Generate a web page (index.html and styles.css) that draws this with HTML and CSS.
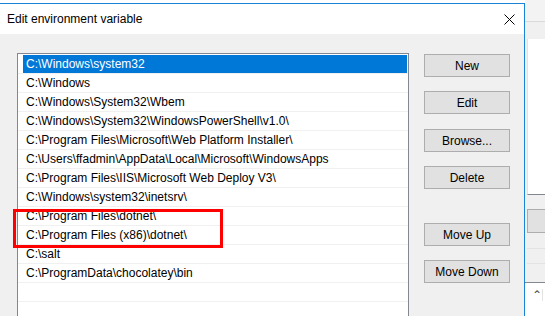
FILE: index.html
```html
<!DOCTYPE html>
<html>
<head>
<meta charset="utf-8">
<title>Edit environment variable</title>
<link rel="stylesheet" href="styles.css">
</head>
<body>
<div class="screen">
  <div class="dialog">
    <div class="titlebar">
      <span class="title">Edit environment variable</span>
      <svg class="close" width="11" height="11" viewBox="0 0 11 11"><path d="M0.5 0.5L10.5 10.5M10.5 0.5L0.5 10.5" stroke="#000" stroke-width="1" fill="none"/></svg>
    </div>
    <div class="content">
      <div class="list">
        <div class="row selected"><span class="cell">C:\Windows\system32</span></div>
        <div class="row"><span class="cell">C:\Windows</span></div>
        <div class="row"><span class="cell">C:\Windows\System32\Wbem</span></div>
        <div class="row"><span class="cell">C:\Windows\System32\WindowsPowerShell\v1.0\</span></div>
        <div class="row"><span class="cell">C:\Program Files\Microsoft\Web Platform Installer\</span></div>
        <div class="row"><span class="cell">C:\Users\ffadmin\AppData\Local\Microsoft\WindowsApps</span></div>
        <div class="row"><span class="cell">C:\Program Files\IIS\Microsoft Web Deploy V3\</span></div>
        <div class="row"><span class="cell">C:\Windows\system32\inetsrv\</span></div>
        <div class="row"><span class="cell">C:\Program Files\dotnet\</span></div>
        <div class="row"><span class="cell">C:\Program Files (x86)\dotnet\</span></div>
        <div class="row"><span class="cell">C:\salt</span></div>
        <div class="row"><span class="cell">C:\ProgramData\chocolatey\bin</span></div>
        <div class="row"><span class="cell"></span></div>
        <div class="row"><span class="cell"></span></div>
      </div>
      <div class="buttons">
        <div class="btn-group">
          <button class="btn">New</button>
          <button class="btn">Edit</button>
          <button class="btn btn-shift">Browse...</button>
          <button class="btn">Delete</button>
        </div>
        <div class="btn-group">
          <button class="btn">Move Up</button>
          <button class="btn">Move Down</button>
        </div>
      </div>
      <div class="annotation"></div>
    </div>
  </div>
  <div class="behind">
    <div class="b-title"></div>
    <div class="b-gap"></div>
    <div class="b-list"></div>
    <div class="b-panel">
      <div class="b-btn"></div>
      <div class="b-line"></div>
      <div class="b-line"></div>
    </div>
    <div class="b-list2">
      <span class="b-arrow">&#x2303;</span>
    </div>
  </div>
</div>
</body>
</html>
```
FILE: styles.css
```css
* { box-sizing: border-box; }
html, body { margin: 0; padding: 0; }
body {
  width: 545px;
  height: 316px;
  overflow: hidden;
  background: #fff;
  font-family: "Liberation Sans", Arial, sans-serif;
  font-size: 12px;
  color: #000;
}
.screen { display: flex; height: 316px; overflow: hidden; }

.dialog {
  width: 525px;
  flex: none;
  margin-top: 3px;
  height: 313px;
  border-top: 1px solid #1883d7;
  border-right: 1px solid #1883d7;
  display: flex;
  flex-direction: column;
}
.titlebar {
  height: 30px;
  flex: none;
  background: #fff;
  display: flex;
  align-items: center;
  justify-content: space-between;
  padding: 0 9px 0 7px;
}
.close { display: block; }

.content {
  flex: 1;
  position: relative;
  overflow: hidden;
  background: #f0f0f0;
  display: flex;
  align-items: flex-start;
  padding: 19px 0 0 17px;
}
.list {
  width: 392px;
  height: 263px;
  flex: none;
  overflow: hidden;
  background: #fff;
  border: 1px solid #828790;
  border-bottom: none;
  padding-top: 1px;
}
.row {
  height: 19px;
  border-bottom: 1px solid #f0f0f0;
  padding: 0 1px 0 5px;
}
.cell {
  display: block;
  height: 18px;
  line-height: 18px;
  padding-left: 3px;
  white-space: nowrap;
  overflow: hidden;
}
.selected .cell { background: #0078d7; color: #fff; }

.buttons {
  margin: 1px 0 0 15px;
  width: 86px;
  display: flex;
  flex-direction: column;
  gap: 34px;
}
.btn-group { display: flex; flex-direction: column; gap: 14px; }
.btn {
  width: 86px;
  height: 23px;
  padding: 0;
  border: 1px solid #adadad;
  background: #e1e1e1;
  font: inherit;
  color: #000;
}
.btn-shift { margin-top: 1px; }

.annotation {
  position: absolute;
  left: 13px;
  top: 175px;
  width: 210px;
  height: 39px;
  border: 3px solid #ff0000;
}

.behind {
  flex: 1;
  display: flex;
  flex-direction: column;
  background: #f0f0f0;
  overflow: hidden;
}
.b-title { height: 22px; background: #f3f3f3; border-bottom: 1px solid #d9d9d9; flex: none; }
.b-gap { height: 17px; flex: none; }
.b-list {
  height: 156px;
  flex: none;
  margin-left: 2px;
  background: #fff;
  border-left: 1px solid #e3e3e3;
  border-bottom: 1px solid #828790;
}
.b-panel { height: 87px; flex: none; padding: 14px 0 0 2px; display: flex; flex-direction: column; }
.b-btn { height: 24px; flex: none; border: 1px solid #adadad; border-right: none; background: #e1e1e1; margin-bottom: 15px; }
.b-line { height: 15px; flex: none; border-top: 1px solid #e3e3e3; }
.b-list2 {
  flex: 1;
  min-height: 0;
  background: #fff;
  border-top: 1px solid #828790;
  padding: 6px 0 0 7px;
  color: #555;
  font-size: 12px;
  line-height: 12px;
}
.b-arrow { display: block; width: 11px; border-right: 1px solid #e3e3e3; }
```
